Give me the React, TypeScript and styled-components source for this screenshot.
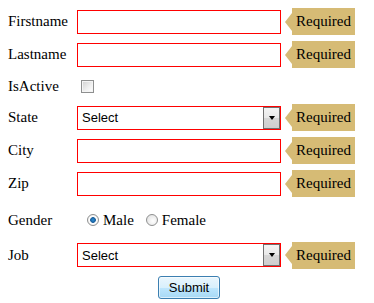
import styled, { createGlobalStyle } from 'styled-components';

const GlobalStyle = createGlobalStyle`
  body {
    margin: 0;
    background: #ffffff;
    font-family: 'Liberation Serif', 'Times New Roman', serif;
    font-size: 15px;
    color: #000000;
  }
`;

const Form = styled.form`
  padding: 5px 0 0 8px;
  display: flex;
  flex-direction: column;
`;

const Row = styled.div<{ $h: number }>`
  display: flex;
  align-items: center;
  height: ${(p) => p.$h}px;
`;

const Label = styled.label`
  width: 69px;
  flex-shrink: 0;
`;

const TextInput = styled.input`
  box-sizing: border-box;
  width: 204px;
  height: 24px;
  margin: 0;
  border: 1px solid #ff0000;
  padding: 0 4px;
  font-family: 'Liberation Sans', Arial, sans-serif;
  font-size: 13px;
  outline: none;
`;

const SelectBox = styled.div`
  box-sizing: border-box;
  width: 204px;
  height: 24px;
  border: 1px solid #ff0000;
  display: flex;
  align-items: center;
  background: #ffffff;
`;

const NativeSelect = styled.select`
  appearance: none;
  flex: 1;
  height: 100%;
  border: none;
  background: transparent;
  padding: 0 0 0 4px;
  margin: 0;
  font-family: 'Liberation Sans', Arial, sans-serif;
  font-size: 13px;
  color: #000000;
  outline: none;
`;

const DropButton = styled.span`
  box-sizing: border-box;
  width: 17px;
  height: 22px;
  border: 1px solid #707070;
  background: linear-gradient(#f4f4f4 0%, #e8e8e8 50%, #d6d6d6 51%, #cfcfcf 100%);
  display: flex;
  align-items: center;
  justify-content: center;
  &::after {
    content: '';
    border-top: 4px solid #000000;
    border-left: 3.5px solid transparent;
    border-right: 3.5px solid transparent;
  }
`;

const Badge = styled.div`
  display: flex;
  align-items: center;
  margin-left: 4px;
`;

const BadgeArrow = styled.span`
  width: 0;
  height: 0;
  border-right: 7px solid #d6bb75;
  border-top: 9px solid transparent;
  border-bottom: 9px solid transparent;
`;

const BadgeBody = styled.span`
  height: 27px;
  line-height: 27px;
  padding: 0 4px;
  background: #d6bb75;
  white-space: nowrap;
`;

const Checkbox = styled.input`
  appearance: none;
  box-sizing: border-box;
  width: 13px;
  height: 13px;
  margin: 0 0 0 4px;
  border: 1px solid #8e8f8f;
  background: linear-gradient(135deg, #cfcfcf 0%, #f0f0f0 60%, #ffffff 100%);
  box-shadow: inset 0 0 0 1px #f4f4f4;
`;

const RadioGroup = styled.div`
  display: flex;
  align-items: center;
  padding-left: 10px;
`;

const RadioLabel = styled.label`
  display: flex;
  align-items: center;
  margin-right: 12px;
`;

const Radio = styled.input`
  appearance: none;
  box-sizing: border-box;
  width: 12px;
  height: 12px;
  margin: 0 4px 0 0;
  border-radius: 50%;
  border: 1px solid #8e8f8f;
  background: radial-gradient(circle at 60% 60%, #ffffff 0%, #dcdcdc 100%);
  &:checked {
    background: radial-gradient(circle, #2a8fd8 0%, #1a5e9a 2.5px, #ffffff 3.2px, #e4e4e4 100%);
  }
`;

const SubmitRow = styled.div`
  display: flex;
  justify-content: center;
  align-items: center;
  width: 362px;
  height: 34px;
`;

const SubmitButton = styled.button`
  box-sizing: border-box;
  width: 62px;
  height: 23px;
  padding: 0;
  border: 1px solid #3c7fb1;
  border-radius: 3px;
  background: linear-gradient(#eaf6fd 0%, #d9f0fc 50%, #bee6fd 51%, #a7d9f5 100%);
  box-shadow: inset 0 0 0 1px rgba(255, 255, 255, 0.6);
  font-family: 'Liberation Sans', Arial, sans-serif;
  font-size: 13px;
  color: #000000;
`;

const Required = () => (
  <Badge>
    <BadgeArrow />
    <BadgeBody>Required</BadgeBody>
  </Badge>
);

const Select = ({ name }: { name: string }) => (
  <SelectBox>
    <NativeSelect name={name} defaultValue="">
      <option value="">Select</option>
    </NativeSelect>
    <DropButton />
  </SelectBox>
);

const App = () => {
  return (
    <>
      <GlobalStyle />
      <Form onSubmit={(e) => e.preventDefault()}>
        <Row $h={33}>
          <Label>Firstname</Label>
          <TextInput name="firstname" />
          <Required />
        </Row>
        <Row $h={33}>
          <Label>Lastname</Label>
          <TextInput name="lastname" />
          <Required />
        </Row>
        <Row $h={30}>
          <Label>IsActive</Label>
          <Checkbox type="checkbox" name="isActive" />
        </Row>
        <Row $h={33}>
          <Label>State</Label>
          <Select name="state" />
          <Required />
        </Row>
        <Row $h={33}>
          <Label>City</Label>
          <TextInput name="city" />
          <Required />
        </Row>
        <Row $h={33}>
          <Label>Zip</Label>
          <TextInput name="zip" />
          <Required />
        </Row>
        <Row $h={40}>
          <Label>Gender</Label>
          <RadioGroup>
            <RadioLabel>
              <Radio type="radio" name="gender" defaultChecked />
              Male
            </RadioLabel>
            <RadioLabel>
              <Radio type="radio" name="gender" />
              Female
            </RadioLabel>
          </RadioGroup>
        </Row>
        <Row $h={30}>
          <Label>Job</Label>
          <Select name="job" />
          <Required />
        </Row>
        <SubmitRow>
          <SubmitButton type="submit">Submit</SubmitButton>
        </SubmitRow>
      </Form>
    </>
  );
};

export default App;
